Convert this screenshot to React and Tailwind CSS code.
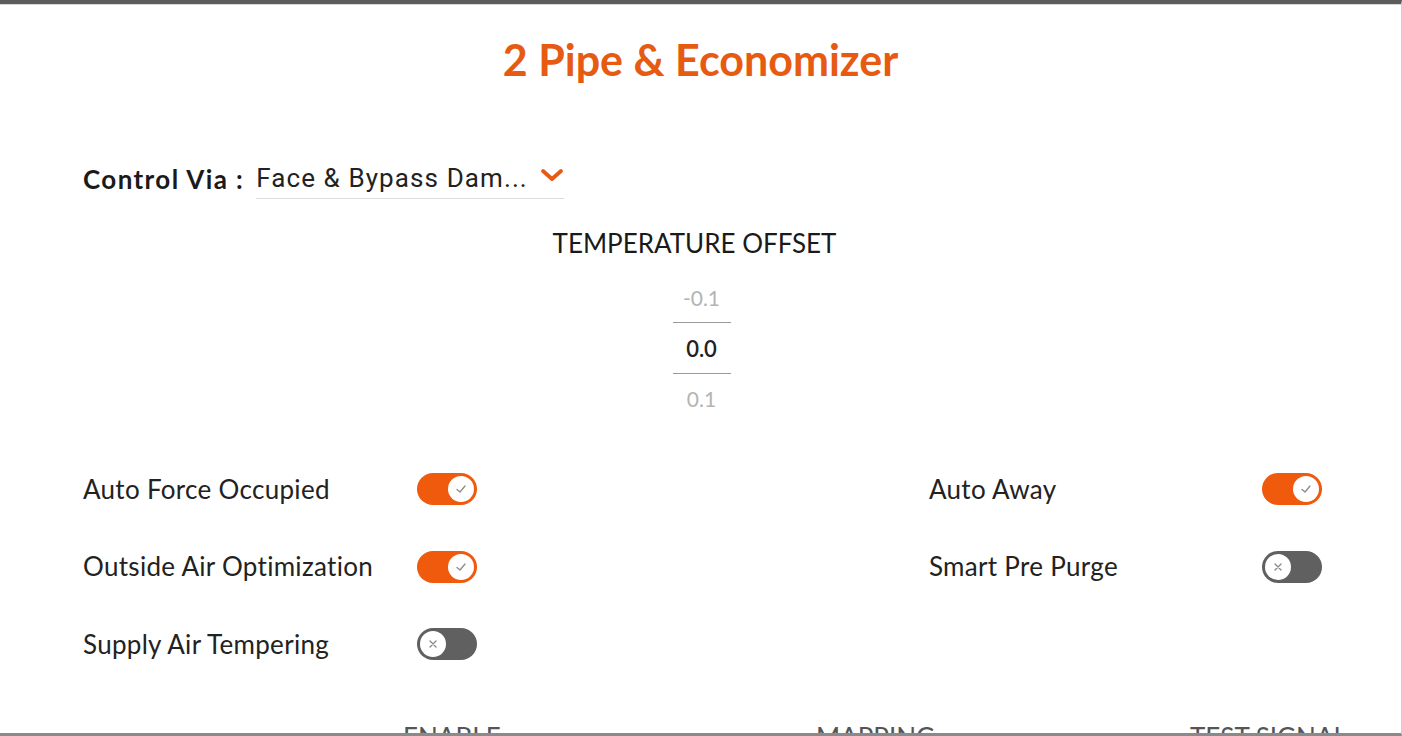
import React from 'react';

const Toggle = ({ on }) => (
  <div
    className={`relative h-[32px] w-[60px] rounded-full flex items-center px-[3px] ${
      on ? 'bg-[#ef5a0c] justify-end' : 'bg-[#606060] justify-start'
    }`}
  >
    <div className="h-[26px] w-[26px] rounded-full bg-white flex items-center justify-center">
      {on ? (
        <svg width="12" height="12" viewBox="0 0 12 12" fill="none">
          <path d="M2 6.5 L5 9 L10 3" stroke="#8a8a8a" strokeWidth="1.3" strokeLinecap="round" strokeLinejoin="round" />
        </svg>
      ) : (
        <svg width="10" height="10" viewBox="0 0 10 10" fill="none">
          <path d="M2 2 L8 8 M8 2 L2 8" stroke="#8a8a8a" strokeWidth="1.4" strokeLinecap="round" />
        </svg>
      )}
    </div>
  </div>
);

const Row = ({ label, on }) => (
  <div className="flex items-center justify-between h-[40px]">
    <span className="text-[26px] text-[#222] tracking-[0.3px]">{label}</span>
    <Toggle on={on} />
  </div>
);

export default function App() {
  return (
    <div
      className="h-[736px] w-full overflow-hidden bg-white border-t-[4px] border-t-[#5c5c5c] border-r border-r-[#d0d0d0] border-b-[3px] border-b-[#8a8a8a]"
      style={{ fontFamily: 'Lato, "Open Sans", sans-serif' }}
    >
      <div className="h-px bg-[#d8d8d8]" />
      <h1 className="mt-[29px] text-center text-[43px] leading-[52px] font-bold text-[#e65a12]">
        2 Pipe &amp; Economizer
      </h1>

      <div className="mt-[73px] pl-[83px] flex items-center h-[40px]">
        <span className="text-[26px] font-bold text-[#1a1a1a] tracking-[1.4px] mr-[12px]">Control Via :</span>
        <div className="flex items-center justify-between w-[308px] border-b border-[#dcdcdc] h-[40px]">
          <span className="text-[26px] text-[#222] tracking-[1.1px]" style={{ fontFamily: 'Roboto, sans-serif' }}>
            Face &amp; Bypass Dam...
          </span>
          <svg width="24" height="15" viewBox="0 0 24 15" fill="none" className="mb-[7px]">
            <path d="M3 3 L12 11 L21 3" stroke="#e65a12" strokeWidth="3.8" strokeLinecap="round" strokeLinejoin="round" />
          </svg>
        </div>
      </div>

      <div className="mt-[28px] text-center text-[26px] leading-[32px] text-[#1a1a1a] uppercase pr-[12px]">
        Temperature Offset
      </div>

      <div className="mt-[25px] flex flex-col items-center pl-[2px]">
        <div className="text-[21px] leading-[28px] text-[#b4b4b4]">-0.1</div>
        <div className="mt-[10px] w-[58px] h-px bg-[#9a9a9a]" />
        <div className="mt-[12px] text-[22px] leading-[28px] text-[#222] font-semibold">0.0</div>
        <div className="mt-[10px] w-[58px] h-px bg-[#9a9a9a]" />
        <div className="mt-[11px] text-[21px] leading-[28px] text-[#b4b4b4]">0.1</div>
      </div>

      <div className="mt-[56px] pl-[83px] pr-[79px] flex justify-between">
        <div className="w-[394px] flex flex-col gap-[37.5px]">
          <Row label="Auto Force Occupied" on />
          <Row label="Outside Air Optimization" on />
          <Row label="Supply Air Tempering" on={false} />
        </div>
        <div className="w-[393px] flex flex-col gap-[37.5px]">
          <Row label="Auto Away" on />
          <Row label="Smart Pre Purge" on={false} />
        </div>
      </div>

      <div className="mt-[57px] grid grid-cols-[403px_413px_374px_auto] text-[26px] leading-[32px] text-[#555] uppercase">
        <div />
        <div>Enable</div>
        <div>Mapping</div>
        <div>Test Signal</div>
      </div>
    </div>
  );
}
